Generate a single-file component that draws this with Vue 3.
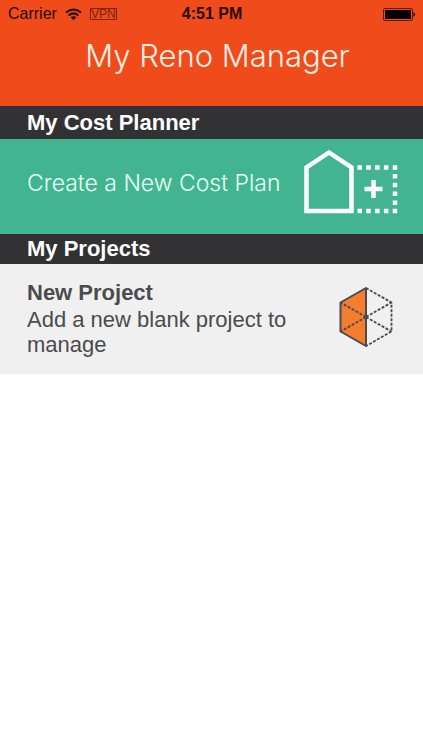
<script setup>
const carrier = 'Carrier'
const time = '4:51 PM'
</script>

<template>
  <div class="app">
    <header class="header">
      <div class="status">
        <div class="status-left">
          <span>{{ carrier }}</span>
          <svg class="wifi" viewBox="0 0 17 13" width="17" height="13" aria-hidden="true">
            <path d="M1 4.6 Q8.500 -1.600 16 4.600" />
            <path d="M3.600 7.400 Q8.500 3.300 13.400 7.400" />
            <path class="wifi-dot" d="M5.600 9.300 Q8.500 7.200 11.400 9.300 L8.500 12.300 Z" />
          </svg>
          <span class="vpn">VPN</span>
        </div>
        <span class="time">{{ time }}</span>
        <div class="status-right">
          <svg viewBox="0 0 33 13" width="33" height="13" aria-hidden="true">
            <rect x="0.500" y="0.500" width="29" height="12" rx="1.500" fill="none" stroke="#5c1c08" />
            <rect x="2" y="2" width="26" height="9" rx="0.500" fill="#000" />
            <path d="M30.500 4 Q33.500 6.500 30.500 9 Z" fill="#1c0702" />
          </svg>
        </div>
      </div>
      <h1 class="title">My Reno Manager</h1>
    </header>

    <main>
      <section>
        <h2 class="bar planner-bar">My Cost Planner</h2>
        <button type="button" class="row plan">
          <span class="plan-label">Create a New Cost Plan</span>
          <svg class="house" viewBox="0 0 94 65" width="94" height="65" aria-hidden="true">
            <path d="M2.500 61 V17.500 L25 2.500 L47.500 17.500 V61 Z" fill="none" stroke="#fff" stroke-width="4.500" />
            <path d="M53.500 17.500 H93.500" fill="none" stroke="#fff" stroke-width="4.500" stroke-dasharray="4.500 4.300" />
            <path d="M53.500 61 H93.500" fill="none" stroke="#fff" stroke-width="4.500" stroke-dasharray="4.500 4.300" />
            <path d="M91 24 V55" fill="none" stroke="#fff" stroke-width="4.500" stroke-dasharray="4.500 4.300" />
            <path d="M60.500 39 H78.500 M69.500 30 V48" fill="none" stroke="#fff" stroke-width="4.500" />
          </svg>
        </button>
      </section>

      <section>
        <h2 class="bar projects-bar">My Projects</h2>
        <button type="button" class="row project">
          <span class="project-text">
            <strong>New Project</strong>
            <span>Add a new blank project to manage</span>
          </span>
          <svg class="hexagon" viewBox="0 0 54 62" width="54" height="62" aria-hidden="true">
            <path d="M27 2 L1.500 16.500 V45.500 L27 60 Z" fill="#f47d30" stroke="#4b4b4d" stroke-width="2" stroke-linejoin="round" />
            <g fill="none" stroke="#4b4b4d" stroke-width="1.800" stroke-dasharray="3 1.500">
              <path d="M27 2 L52.500 16.500 V45.500 L27 60" />
              <path d="M27 31 L1.500 16.500" />
              <path d="M27 31 L1.500 45.500" />
              <path d="M27 31 L52.500 16.500" />
              <path d="M27 31 L52.500 45.500" />
            </g>
            <circle cx="27" cy="31" r="2.200" fill="#4b4b4d" />
          </svg>
        </button>
      </section>
    </main>
  </div>
</template>

<style>
body {
  margin: 0;
  background: #fff;
}
</style>

<style scoped>
.app {
  font-family: "Liberation Sans", Arial, sans-serif;
}
.header {
  padding-bottom: 30px;
  background: #f04b1a;
}
.status {
  display: grid;
  grid-template-columns: 1fr auto 1fr;
  align-items: center;
  padding: 4px 7px 0 8px;
  font-size: 16px;
  line-height: 20px;
  color: #260b03;
}
.status-left {
  display: flex;
  align-items: center;
  gap: 8px;
}
.wifi {
  fill: none;
  stroke: #260b03;
  stroke-width: 2;
}
.wifi .wifi-dot {
  fill: #260b03;
  stroke: none;
}
.vpn {
  border: 1px solid #7a260c;
  font-size: 12px;
  line-height: 10px;
  color: #7a260c;
}
.time {
  font-weight: 700;
}
.status-right {
  display: flex;
  justify-content: flex-end;
}
.title {
  margin: 0;
  padding: 12px 0 0 12px;
  font-family: Inter, "Liberation Sans", sans-serif;
  font-size: 31px;
  font-weight: 300;
  line-height: 40px;
  text-align: center;
  color: #fff0e6;
}
.bar {
  margin: 0;
  padding: 0 27px;
  background: #323234;
  color: #fff;
  font-size: 22px;
  font-weight: 700;
}
.planner-bar {
  line-height: 33px;
}
.projects-bar {
  line-height: 30px;
}
.row {
  display: flex;
  align-items: center;
  justify-content: space-between;
  width: 100%;
  border: 0;
  font-family: inherit;
  text-align: left;
  cursor: pointer;
}
.row svg {
  flex: none;
}
.plan {
  padding: 11px 25px 19px 27px;
  background: #42b590;
  color: #e6fff6;
}
.plan-label {
  font-family: Inter, "Liberation Sans", sans-serif;
  font-size: 23px;
  font-weight: 300;
  line-height: 30px;
}
.project {
  align-items: flex-start;
  padding: 16px 30px 17px 27px;
  background: #f0f0f0;
  color: #4b4b4d;
  font-size: 22px;
  line-height: 25px;
}
.hexagon {
  margin-top: 6px;
}
.project-text {
  display: flex;
  flex-direction: column;
  max-width: 270px;
  gap: 2px;
}
.project-text strong {
  font-weight: 700;
}
</style>
